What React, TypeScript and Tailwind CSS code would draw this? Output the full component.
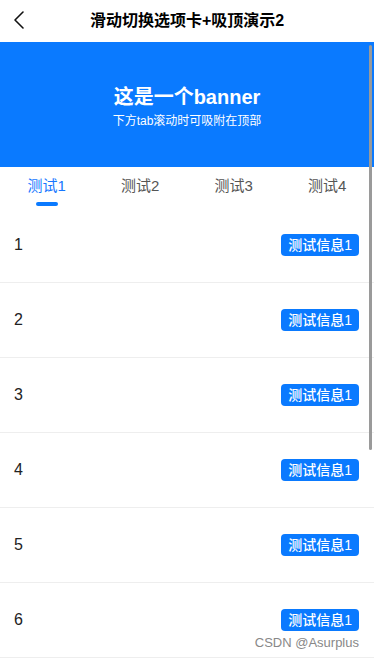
import React from 'react';

const tabs = ['测试1', '测试2', '测试3', '测试4'];
const rows = [1, 2, 3, 4, 5, 6];

export default function App() {
  return (
    <div
      className="relative h-[660px] w-[374px] overflow-hidden bg-white"
      style={{ fontFamily: '"Liberation Sans", "Noto Sans CJK SC", sans-serif' }}
    >
      <header className="flex h-[42px] items-center justify-center relative">
        <svg className="absolute left-[12px] top-[10px]" width="14" height="20" viewBox="0 0 14 20" fill="none">
          <path d="M11 2 L3 10 L11 18" stroke="#111" strokeWidth="1.6" strokeLinecap="round" strokeLinejoin="round" />
        </svg>
        <h1 className="text-[16px] font-bold text-black">滑动切换选项卡+吸顶演示2</h1>
      </header>

      <section className="flex h-[125px] flex-col items-center justify-center bg-[#0a7aff] text-white">
        <div className="text-[20px] font-bold leading-[26px] mt-[4px]">这是一个banner</div>
        <div className="text-[12px] leading-[18px] mt-[2px]">下方tab滚动时可吸附在顶部</div>
      </section>

      <nav className="grid h-[41px] grid-cols-4">
        {tabs.map((t, i) => (
          <div key={t} className="flex flex-col items-center pt-[8px]">
            <span className={`text-[15px] leading-[22px] ${i === 0 ? 'text-[#1677ff]' : 'text-[#555]'}`}>{t}</span>
            {i === 0 && <span className="mt-[5px] h-[4px] w-[22px] rounded-full bg-[#0a7aff]" />}
          </div>
        ))}
      </nav>

      <ul>
        {rows.map((n) => (
          <li key={n} className="flex h-[75px] items-center justify-between border-b border-[#eeeeee] pl-[14px] pr-[15px]">
            <span className="text-[16px] text-[#222]">{n}</span>
            <span className="rounded-[4px] bg-[#0a7aff] px-[7px] py-[1px] text-[14px] font-medium leading-[20px] text-white">
              测试信息1
            </span>
          </li>
        ))}
      </ul>

      <div className="absolute right-[2px] top-[45px] h-[405px] w-[3px] rounded-full bg-[#9a9a9a]" />
      <div className="absolute bottom-[8px] right-[15px] text-[13px] text-[#888]">
        CSDN @Asurplus
      </div>
    </div>
  );
}
